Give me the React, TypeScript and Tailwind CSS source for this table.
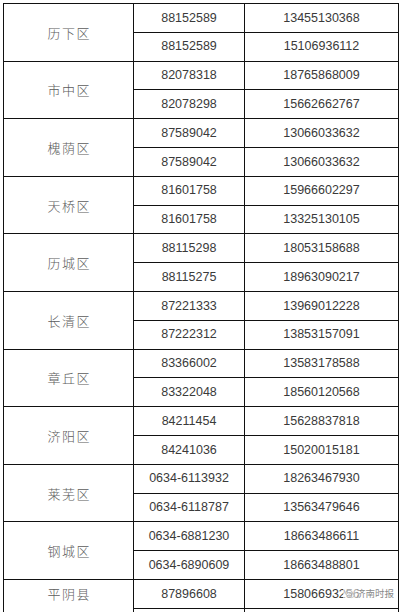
import React from "react";

type District = {
  name: string;
  rows: [string, string][];
};

const districts: District[] = [
  { name: "历下区", rows: [["88152589", "13455130368"], ["88152589", "15106936112"]] },
  { name: "市中区", rows: [["82078318", "18765868009"], ["82078298", "15662662767"]] },
  { name: "槐荫区", rows: [["87589042", "13066033632"], ["87589042", "13066033632"]] },
  { name: "天桥区", rows: [["81601758", "15966602297"], ["81601758", "13325130105"]] },
  { name: "历城区", rows: [["88115298", "18053158688"], ["88115275", "18963090217"]] },
  { name: "长清区", rows: [["87221333", "13969012228"], ["87222312", "13853157091"]] },
  { name: "章丘区", rows: [["83366002", "13583178588"], ["83322048", "18560120568"]] },
  { name: "济阳区", rows: [["84211454", "15628837818"], ["84241036", "15020015181"]] },
  { name: "莱芜区", rows: [["0634-6113932", "18263467930"], ["0634-6118787", "13563479646"]] },
  { name: "钢城区", rows: [["0634-6881230", "18663486611"], ["0634-6890609", "18663488801"]] },
];

const cjk = "font-['Noto_Sans_CJK_SC','Noto_Sans',sans-serif]";
const num = "font-['Liberation_Sans',Arial,sans-serif]";

function NameCell({ name }: { name: string }) {
  return (
    <div className="row-span-2 flex items-center justify-center bg-white">
      <span className={`${cjk} pl-[1.5px] text-[13px] font-light leading-none tracking-[1.5px] text-[#5c5c5c]`}>
        {name}
      </span>
    </div>
  );
}

function NumCell({ value, children }: { value: string; children?: React.ReactNode }) {
  return (
    <div className="relative flex items-center justify-center bg-white">
      <span className={`${num} text-[12.5px] leading-none text-[#3a3a3a]`}>{value}</span>
      {children}
    </div>
  );
}

function Watermark() {
  return (
    <div className="absolute right-[4px] top-1/2 flex -translate-y-1/2 items-center gap-[1px] bg-white/60 pl-[2px]">
      <svg width="10" height="10" viewBox="0 0 10 10" className="opacity-70">
        <ellipse cx="4" cy="4" rx="3.4" ry="2.8" fill="none" stroke="#9a9a9a" strokeWidth="1" />
        <ellipse cx="6.5" cy="6.3" rx="2.8" ry="2.3" fill="none" stroke="#b0b0b0" strokeWidth="1" />
      </svg>
      <span className={`${cjk} text-[9.5px] leading-none text-[#8a8a8a]`}>济南时报</span>
    </div>
  );
}

export default function App() {
  return (
    <div className="h-[612px] w-[403px] overflow-hidden bg-white">
      <div className="ml-[3px] mt-[3px] grid w-fit grid-cols-[129px_110px_153px] grid-rows-[repeat(22,27.81px)] gap-px bg-[#111] p-px">
        {districts.map((d) => (
          <React.Fragment key={d.name}>
            <NameCell name={d.name} />
            {d.rows.map(([a, b], i) => (
              <React.Fragment key={i}>
                <NumCell value={a} />
                <NumCell value={b} />
              </React.Fragment>
            ))}
          </React.Fragment>
        ))}
        <div className="row-span-2 flex justify-center bg-white">
          <div className="flex h-[27.81px] items-center">
            <span className={`${cjk} pl-[1.5px] text-[13px] font-light leading-none tracking-[1.5px] text-[#5c5c5c]`}>
              平阴县
            </span>
          </div>
        </div>
        <NumCell value="87896608" />
        <NumCell value="15806693256">
          <Watermark />
        </NumCell>
        <div className="bg-white" />
        <div className="bg-white" />
      </div>
    </div>
  );
}
